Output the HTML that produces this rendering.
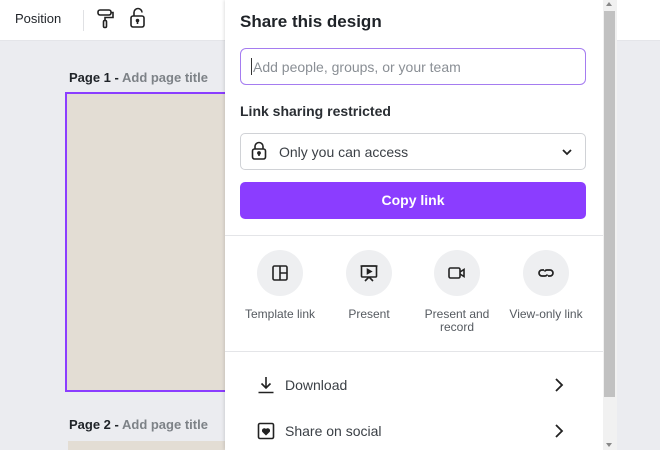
<!DOCTYPE html>
<html><head><style>
*{margin:0;padding:0;box-sizing:border-box}
body{width:660px;height:450px;overflow:hidden;background:#ebecf0;font-family:"Liberation Sans",sans-serif;position:relative;color:#0e1318}
.a{position:absolute}
.top{left:0;top:0;width:660px;height:41px;background:#fff;border-bottom:1px solid #e4e5e9}
.lbl{font-size:13px;font-weight:bold;color:#1f2328}
.lbl span{color:#7d8287}
.panel{left:225px;top:0;width:378px;height:450px;background:#fff;box-shadow:-1px 0 3px rgba(0,0,0,.12)}
.box{border:1px solid #d0d2d6;border-radius:5px}
.circ{width:46px;height:46px;border-radius:50%;background:#eeeff1;display:flex;align-items:center;justify-content:center}
.cap{font-size:12px;color:#555a60;text-align:center;width:100px;line-height:13px}
.row{font-size:14px;color:#3a3f45}
</style></head><body>
<div class="a top"></div>
<div class="a" style="left:15px;top:11px;font-size:13px;color:#1f2328">Position</div>
<div class="a" style="left:83px;top:10px;width:1px;height:21px;background:#e0e1e4"></div>
<svg class="a" style="left:96px;top:8px" width="20" height="22" viewBox="0 0 20 22" fill="none" stroke="#222" stroke-width="1.6"><rect x="2" y="2" width="13" height="5" rx="2"/><path d="M15 4.5h2v5H9v3"/><rect x="7.5" y="12.5" width="3" height="7" rx="1.2"/></svg>
<svg class="a" style="left:129px;top:7px" width="18" height="22" viewBox="0 0 18 22" fill="none" stroke="#222" stroke-width="1.6"><path d="M5 9V5.5a4 4 0 0 1 8 0"/><rect x="2" y="9" width="13" height="11" rx="2"/><path d="M8.5 13v4" /><circle cx="8.5" cy="13.5" r="1" fill="#222"/></svg>
<div class="a lbl" style="left:69px;top:70px">Page 1 - <span>Add page title</span></div>
<div class="a" style="left:65px;top:92px;width:165px;height:300px;background:#e3ddd4;border:2px solid #8b3dff"></div>
<div class="a lbl" style="left:69px;top:417px">Page 2 - <span>Add page title</span></div>
<div class="a" style="left:68px;top:441px;width:162px;height:9px;background:#e3ddd4"></div>

<div class="a panel"></div>
<div class="a" style="left:240px;top:12px;font-size:17px;font-weight:bold;color:#1f2328">Share this design</div>
<div class="a" style="left:240px;top:48px;width:346px;height:37px;border:1.5px solid #a57cf0;border-radius:6px"></div>
<div class="a" style="left:251px;top:58px;width:1px;height:17px;background:#333"></div>
<div class="a" style="left:253px;top:59px;font-size:14px;color:#8a8f95">Add people, groups, or your team</div>
<div class="a" style="left:240px;top:103px;font-size:14px;font-weight:bold;color:#2a2e33">Link sharing restricted</div>
<div class="a box" style="left:240px;top:133px;width:346px;height:37px"></div>
<svg class="a" style="left:250px;top:141px" width="18" height="20" viewBox="0 0 18 20" fill="none" stroke="#222" stroke-width="1.6"><path d="M5 8V5.5a4 4 0 0 1 8 0V8"/><rect x="2.5" y="8" width="13" height="10" rx="2"/><circle cx="9" cy="12" r="1.1" fill="#222"/><path d="M9 12v3"/></svg>
<div class="a" style="left:279px;top:144px;font-size:14px;color:#3a3f45">Only you can access</div>
<svg class="a" style="left:561px;top:148px" width="12" height="8" viewBox="0 0 12 8" fill="none" stroke="#222" stroke-width="1.8"><path d="M2 2l4 4 4-4"/></svg>
<div class="a" style="left:240px;top:182px;width:346px;height:37px;background:#8b3dff;border-radius:5px;color:#fff;font-weight:bold;font-size:14px;text-align:center;line-height:37px">Copy link</div>
<div class="a" style="left:225px;top:235px;width:378px;height:1px;background:#e4e5e8"></div>

<div class="a circ" style="left:257px;top:250px"><svg width="18" height="18" viewBox="0 0 18 18" fill="none" stroke="#222" stroke-width="1.6"><rect x="2" y="2" width="14" height="14" rx="1.5"/><path d="M9 2v14M9 9h7"/></svg></div>
<div class="a circ" style="left:346px;top:250px"><svg width="20" height="20" viewBox="0 0 20 20" fill="none" stroke="#222" stroke-width="1.6"><rect x="2.5" y="3" width="15" height="11" rx="1"/><path d="M8.5 6.5l3.5 2-3.5 2z" fill="#222"/><path d="M10 14l-4 4M10 14l4 4M1.5 3h17"/></svg></div>
<div class="a circ" style="left:434px;top:250px"><svg width="20" height="18" viewBox="0 0 20 18" fill="none" stroke="#222" stroke-width="1.6"><rect x="2" y="4" width="11" height="10" rx="1.5"/><path d="M13 8l4-2.5v7L13 10"/></svg></div>
<div class="a circ" style="left:523px;top:250px"><svg width="20" height="18" viewBox="0 0 20 18" fill="none" stroke="#222" stroke-width="1.7"><path d="M8 6H6a3 3 0 0 0 0 6h3a3 3 0 0 0 2.5-1.5"/><path d="M12 12h2a3 3 0 0 0 0-6h-3a3 3 0 0 0-2.5 1.5"/></svg></div>
<div class="a cap" style="left:230px;top:308px">Template link</div>
<div class="a cap" style="left:319px;top:308px">Present</div>
<div class="a cap" style="left:407px;top:308px">Present and<br>record</div>
<div class="a cap" style="left:496px;top:308px">View-only link</div>
<div class="a" style="left:225px;top:351px;width:378px;height:1px;background:#e4e5e8"></div>

<svg class="a" style="left:257px;top:376px" width="18" height="18" viewBox="0 0 18 18" fill="none" stroke="#222" stroke-width="1.6"><path d="M9 1v11M4.5 7.5L9 12l4.5-4.5M1.5 16.5h15"/></svg>
<div class="a row" style="left:285px;top:377px">Download</div>
<svg class="a" style="left:554px;top:377px" width="10" height="16" viewBox="0 0 10 16" fill="none" stroke="#222" stroke-width="1.8"><path d="M2 2l6 6-6 6"/></svg>
<svg class="a" style="left:257px;top:422px" width="18" height="18" viewBox="0 0 18 18" fill="none" stroke="#222" stroke-width="1.6"><rect x="1.5" y="1.5" width="15" height="15" rx="1.5"/><path d="M9 13l-3.3-3.2a2 2 0 0 1 3.3-2.3 2 2 0 0 1 3.3 2.3z" fill="#222" stroke-width="0.8"/></svg>
<div class="a row" style="left:285px;top:423px">Share on social</div>
<svg class="a" style="left:554px;top:423px" width="10" height="16" viewBox="0 0 10 16" fill="none" stroke="#222" stroke-width="1.8"><path d="M2 2l6 6-6 6"/></svg>

<div class="a" style="left:603px;top:0;width:14px;height:450px;background:#f1f1f1"></div>
<div class="a" style="left:604px;top:11px;width:11px;height:386px;background:#c1c1c1"></div>
<div class="a" style="left:606px;top:2px;width:0;height:0;border-left:3px solid transparent;border-right:3px solid transparent;border-bottom:4px solid #888"></div>
<div class="a" style="left:606px;top:443px;width:0;height:0;border-left:3px solid transparent;border-right:3px solid transparent;border-top:4px solid #888"></div>
</body></html>
